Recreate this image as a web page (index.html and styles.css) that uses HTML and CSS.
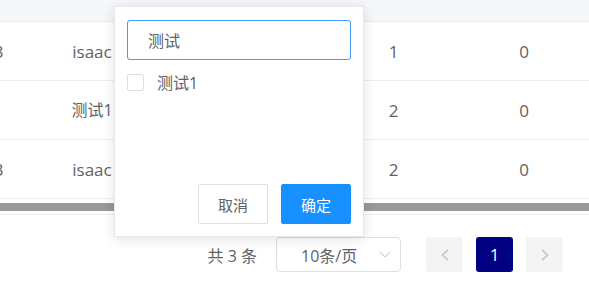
FILE: index.html
```html
<!DOCTYPE html>
<html lang="zh">
<head>
<meta charset="utf-8">
<link rel="stylesheet" href="styles.css">
</head>
<body>
<div class="page">
  <div class="table-wrap">
    <div class="table">
      <div class="row head">
        <div class="cell"></div><div class="cell"></div><div class="cell"></div><div class="cell"></div><div class="cell"></div>
      </div>
      <div class="row">
        <div class="cell">3</div><div class="cell">isaac</div><div class="cell">测试</div><div class="cell">1</div><div class="cell">0</div>
      </div>
      <div class="row">
        <div class="cell"></div><div class="cell cjk">测试1</div><div class="cell"></div><div class="cell">2</div><div class="cell">0</div>
      </div>
      <div class="row">
        <div class="cell">3</div><div class="cell">isaac</div><div class="cell">测试</div><div class="cell">2</div><div class="cell">0</div>
      </div>
    </div>
    <div class="scrollbar"><div class="thumb"></div></div>
  </div>

  <div class="pager">
    <span class="total">共 3 条</span>
    <div class="size-select">
      <span>10条/页</span>
      <svg class="caret" width="12" height="7" viewBox="0 0 12 7"><path d="M0.5 0.8 L6 5.8 L11.5 0.8" fill="none" stroke="#c0c4cc" stroke-width="1"/></svg>
    </div>
    <button class="pbtn disabled"><svg width="10" height="12" viewBox="0 0 10 12"><path d="M8 0.8 L2.5 6 L8 11.2" fill="none" stroke="#c0c4cc" stroke-width="1.6"/></svg></button>
    <button class="pbtn active">1</button>
    <button class="pbtn disabled"><svg width="10" height="12" viewBox="0 0 10 12"><path d="M2 0.8 L7.5 6 L2 11.2" fill="none" stroke="#c0c4cc" stroke-width="1.6"/></svg></button>
  </div>

  <div class="popover">
    <input class="search" type="text" value="测试">
    <label class="check"><span class="box"></span><span>测试1</span></label>
    <div class="actions">
      <button class="btn">取消</button>
      <button class="btn primary">确定</button>
    </div>
  </div>
</div>
</body>
</html>
```

FILE: styles.css
```css
html, body {
  margin: 0;
  padding: 0;
  background: #fff;
}
body {
  font-family: "Open Sans", "Noto Sans CJK SC", sans-serif;
  color: #606266;
  font-size: 16px;
}
.page {
  position: relative;
  width: 589px;
  height: 295px;
  overflow: hidden;
}
.table-wrap {
  overflow: hidden;
  width: 589px;
  border-bottom: 1px solid #ebeef5;
}
.table {
  margin-left: -43px;
  width: 632px;
}
.row {
  display: grid;
  grid-template-columns: 83px 104px 184px 131px 130px;
  height: 58px;
  border-bottom: 1px solid #ebeef5;
}
.row.head {
  height: 21px;
  background: #f5f7fa;
}
.cell {
  display: flex;
  align-items: center;
  justify-content: center;
  line-height: 1;
  white-space: nowrap;
  font-size: 17px;
}
.cell.cjk {
  font-size: 16px;
}
.scrollbar {
  padding: 4px 0 3px;
}
.thumb {
  height: 8px;
  background: #999;
}
.pager {
  display: flex;
  align-items: center;
  justify-content: flex-end;
  padding: 22px 26px 0 0;
  height: 35px;
}
.total {
  margin-right: 19px;
}
.size-select {
  box-sizing: border-box;
  width: 125px;
  height: 35px;
  border: 1px solid #dcdfe6;
  border-radius: 4px;
  display: flex;
  align-items: center;
  justify-content: space-between;
  padding: 0 9px 0 24px;
  margin-right: 25px;
}
.pbtn {
  box-sizing: border-box;
  width: 37px;
  height: 35px;
  border: none;
  border-radius: 3px;
  background: #f4f4f5;
  display: flex;
  align-items: center;
  justify-content: center;
  padding: 0;
  font-family: inherit;
  font-size: 17px;
  color: #fff;
  margin-left: 13px;
}
.pbtn:first-of-type { margin-left: 0; }
.pbtn.active {
  background: #000080;
}
.popover {
  position: absolute;
  left: 114px;
  top: 6px;
  width: 250px;
  height: 231px;
  box-sizing: border-box;
  background: #fff;
  border: 1px solid #e4e7ed;
  box-shadow: 0 2px 12px rgba(0, 0, 0, 0.12);
  padding: 13px 12px 12px;
  display: flex;
  flex-direction: column;
}
.search {
  box-sizing: border-box;
  width: 100%;
  height: 40px;
  border: 1px solid #409eff;
  border-radius: 3px;
  padding: 0 0 0 20px;
  font-family: inherit;
  font-size: 16px;
  color: #606266;
  outline: none;
  margin: 0;
}
.check {
  display: flex;
  align-items: center;
  margin-top: 14px;
  gap: 13px;
  line-height: 1;
}
.box {
  box-sizing: border-box;
  width: 17px;
  height: 17px;
  border: 1px solid #dcdfe6;
  border-radius: 2px;
  background: #fff;
}
.actions {
  margin-top: auto;
  display: flex;
  justify-content: flex-end;
  gap: 13px;
}
.btn {
  box-sizing: border-box;
  width: 70px;
  height: 40px;
  border: 1px solid #dcdfe6;
  background: #fff;
  color: #606266;
  font-family: inherit;
  font-size: 15px;
  padding: 0;
  border-radius: 2px;
}
.btn.primary {
  background: #1890ff;
  border-color: #1890ff;
  color: #fff;
}
```
